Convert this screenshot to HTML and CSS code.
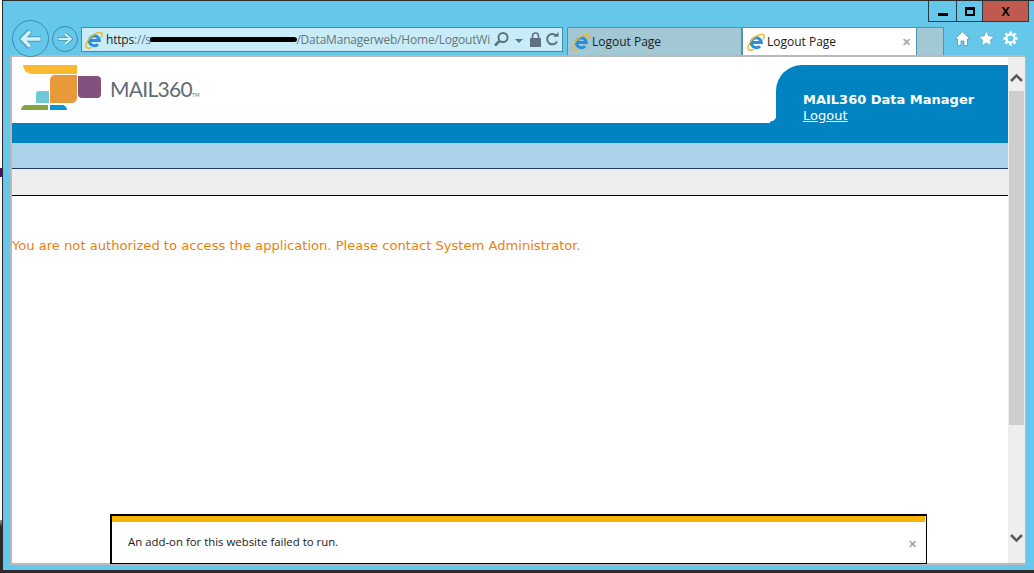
FILE: index.html
```html
<!DOCTYPE html>
<html lang="en">
<head>
    <meta charset="UTF-8">
    <meta name="viewport" content="width=device-width, initial-scale=1.0">
    <title>Logout Page</title>
    <link rel="stylesheet" href="styles.css">
</head>
<body>

    <svg class="defs" width="0" height="0">
        <symbol id="ie" viewBox="0 0 18 18">
            <path d="M4.800 9.500H14.300A5 5 0 1 0 13 13.200" fill="none" stroke="#2b8fd6" stroke-width="3"/>
            <path d="M1.300 16.300C-.5 13 5 4.500 12 2c3-1.100 5.300-.8 5.300 1.300 0 1-.6 2.200-1.500 3.400" fill="none" stroke="#f0b62a" stroke-width="1.400"/>
            <path d="M1.300 16.300c1 1.200 3.200 1.200 5.400 .1" fill="none" stroke="#f0b62a" stroke-width="1.400"/>
        </symbol>
    </svg>

    <div class="window">

        <div class="title-row">
            <div class="controls">
                <div class="ctl ctl-min"><span class="min-glyph"></span></div>
                <div class="ctl ctl-max"><span class="max-glyph"></span></div>
                <div class="ctl ctl-close">X</div>
            </div>
        </div>

        <div class="toolbar">
            <div class="nav-back">
                <svg width="24" height="20" viewBox="0 0 24 20">
                    <path d="M11 2L3 10l8 8M3.500 10H22" fill="none" stroke="#3f9dbd" stroke-width="5.400"/>
                    <path d="M11 2.500L3.500 10l7.500 7.500M4 10H21.500" fill="none" stroke="#d6f0fa" stroke-width="3.400"/>
                </svg>
            </div>
            <div class="nav-forward">
                <svg width="16" height="14" viewBox="0 0 16 14">
                    <path d="M8 1.500L14 7l-6 5.500M14 7H1" fill="none" stroke="#3f9dbd" stroke-width="3.600"/>
                    <path d="M8 1.800L13.800 7 8 12.200M13.500 7H1.500" fill="none" stroke="#d6f0fa" stroke-width="2"/>
                </svg>
            </div>
            <div class="address">
                <svg class="tab-ie" width="18" height="18"><use href="#ie"/></svg>
                <span class="url"><b>https</b>://s<span class="scribble"></span>/DataManagerweb/Home/LogoutWi</span>
                <svg class="addr-icon" width="17" height="17" viewBox="0 0 17 17"><circle cx="10" cy="6.500" r="4.500" fill="none" stroke="#5d7480" stroke-width="2"/><path d="M6.500 10L2 14.500" stroke="#5d7480" stroke-width="2.600"/></svg>
                <span class="caret"></span>
                <svg class="addr-icon" width="13" height="15" viewBox="0 0 13 15"><rect x="1" y="6" width="11" height="9" fill="#5d7480"/><path d="M3.500 6V4a3 3 0 0 1 6 0v2" fill="none" stroke="#5d7480" stroke-width="1.600"/></svg>
                <svg class="addr-icon" width="14" height="15" viewBox="0 0 14 15"><path d="M11.500 4A5.200 5.200 0 1 0 12 9.500" fill="none" stroke="#5d7480" stroke-width="2"/><path d="M8.500 4.800h5V0z" fill="#5d7480"/></svg>
            </div>
            <div class="tab">
                <svg class="tab-ie" width="18" height="18"><use href="#ie"/></svg>
                <span>Logout Page</span>
            </div>
            <div class="tab tab-active">
                <svg class="tab-ie" width="18" height="18"><use href="#ie"/></svg>
                <span>Logout Page</span>
                <span class="tab-close">&#10005;</span>
            </div>
            <div class="tab-new"></div>
            <div class="tools">
                <svg width="17" height="17" viewBox="0 0 17 17"><path d="M8.500 1.500L1 9h2.500v6.500h3.500v-4.500h3v4.500h3.500V9H16z" fill="#fff" stroke="#3f8ea9" stroke-width=".7"/></svg>
                <svg width="17" height="17" viewBox="0 0 17 17"><path d="M8.500 1l2.300 5 5.400.6-4 3.700 1.100 5.400-4.800-2.700-4.800 2.700 1.100-5.400-4-3.700 5.400-.6z" fill="#fff" stroke="#3f8ea9" stroke-width=".5"/></svg>
                <svg width="17" height="17" viewBox="0 0 17 17"><path d="M8.500 1.500v2.500M8.500 13v2.500M1.500 8.500h2.500M13 8.500h2.500M3.500 3.500l1.800 1.800M11.700 11.700l1.800 1.800M13.500 3.500l-1.800 1.800M5.300 11.700l-1.800 1.800" stroke="#fff" stroke-width="2.600"/><circle cx="8.500" cy="8.500" r="4" fill="#65c8ea" stroke="#fff" stroke-width="2.200"/></svg>
            </div>
        </div>

        <div class="frame">
            <div class="page">
                <div class="header">
                    <div class="logo">
                        <div class="logo-mark">
                            <span class="mark mark-yellow"></span>
                            <span class="mark mark-orange"></span>
                            <span class="mark mark-purple"></span>
                            <span class="mark mark-teal"></span>
                            <span class="mark mark-green"></span>
                            <span class="mark mark-blue"></span>
                        </div>
                        <div class="logo-text">MAIL360<small>TM</small></div>
                    </div>
                    <div class="user-panel">
                        <div class="app-name">MAIL360 Data Manager</div>
                        <a class="logout" href="#">Logout</a>
                    </div>
                </div>
                <div class="band-blue"></div>
                <div class="band-light"></div>
                <div class="band-grey"></div>
                <p class="message">You are not authorized to access the application. Please contact System Administrator.</p>
            </div>
            <div class="scrollbar">
                <svg width="15" height="10" viewBox="0 0 15 10"><path d="M2 8l5.500-5.500L13 8" fill="none" stroke="#5a5a5a" stroke-width="2.600"/></svg>
                <div class="thumb"></div>
                <svg width="15" height="10" viewBox="0 0 15 10"><path d="M2 2l5.500 5.500L13 2" fill="none" stroke="#5a5a5a" stroke-width="2.600"/></svg>
            </div>
            <div class="notify">
                <div class="notify-bar"></div>
                <div class="notify-body">
                    <span>An add-on for this website failed to run.</span>
                    <span class="notify-close">&#10005;</span>
                </div>
            </div>
        </div>

    </div>

</body>
</html>
```

FILE: styles.css
```css
* { box-sizing: border-box; }

html, body {
    margin: 0;
    height: 573px;
    overflow: hidden;
}

body {
    background: linear-gradient(#fff 168px, #4b0f6b 168px, #4b0f6b 177px, #fff 177px, #fff 520px, #999 520px, #2b2b2b 527px);
    padding: 1px 0 3px 2px;
    font-family: "Open Sans", sans-serif;
}

.defs { position: absolute; }

.window {
    height: 569px;
    background-color: #65c8ea;
    border-left: 1px solid #2b2b2b;
    box-shadow: 0 -1px 0 #2b2b2b;
    display: flex;
    flex-direction: column;
}

/* title row */
.title-row {
    height: 20px;
    display: flex;
    justify-content: flex-end;
    padding-right: 5px;
}
.controls {
    display: flex;
    height: 21px;
    border: 1px solid #2b3a40;
    border-top: none;
    position: relative;
    z-index: 1;
}
.ctl {
    display: flex;
    align-items: center;
    justify-content: center;
    border-right: 1px solid #2b3a40;
    padding-top: 1px;
}
.ctl-min { width: 28px; align-items: flex-end; padding-bottom: 5px; }
.ctl-max { width: 26px; }
.ctl-close {
    width: 45px;
    border-right: none;
    background-color: #c05a50;
    font: bold 13px "Liberation Sans", sans-serif;
    color: #000;
}
.min-glyph { width: 10px; height: 3px; background-color: #000; }
.max-glyph { width: 10px; height: 9px; border: 2px solid #000; border-top-width: 3px; }

/* toolbar */
.toolbar {
    height: 34px;
    padding: 6px 0 0 9px;
    display: flex;
    align-items: flex-start;
}
.nav-back {
    width: 37px;
    height: 37px;
    margin-top: -7px;
    border: 1px solid #3a8ba8;
    border-radius: 50%;
    display: flex;
    align-items: center;
    justify-content: center;
    position: relative;
    z-index: 1;
}
.nav-forward {
    width: 26px;
    height: 26px;
    margin: -1px 0 0 3px;
    border: 1px solid #3a8ba8;
    border-radius: 50%;
    display: flex;
    align-items: center;
    justify-content: center;
}
.address {
    width: 482px;
    height: 25px;
    margin-left: 3px;
    padding: 0 3px 0 3px;
    background-color: #c8edf8;
    border: 1px solid #3f8ea9;
    display: flex;
    align-items: center;
    gap: 3px;
}
.url {
    flex: 1;
    margin-left: 0;
    font-size: 12px;
    letter-spacing: -.2px;
    color: #6b7478;
    white-space: nowrap;
    overflow: hidden;
    display: flex;
    align-items: center;
}
.url b { font-weight: 400; color: #1c1c1c; }
.scribble {
    width: 150px;
    height: 5px;
    margin: 0 -1px;
    background-color: #000;
    border-radius: 3px 4px 3px 2px;
}
.addr-icon { flex: none; }
.caret {
    margin: 2px 3px 0 2px;
    border: 4px solid transparent;
    border-top: 4px solid #5d7480;
    border-bottom: none;
}
.tab {
    width: 175px;
    height: 28px;
    margin-left: 4px;
    padding: 0 4px;
    background-color: #a2c8d6;
    border: 1px solid #5296ae;
    border-bottom: none;
    display: flex;
    align-items: center;
    gap: 2px;
    font-size: 12px;
    color: #1c1c1c;
}
.tab-active {
    margin-left: 0;
    background-color: #fff;
    position: relative;
}
.tab-ie { flex: none; }
.tab-close {
    margin-left: auto;
    font-size: 11px;
    font-weight: 700;
    color: #a8a8a8;
    padding-right: 1px;
}
.tab-new {
    width: 27px;
    height: 28px;
    background-color: #a2c8d6;
    border: 1px solid #5296ae;
    border-left: none;
    border-bottom: none;
}
.tools {
    margin-left: 10px;
    margin-top: 3px;
    display: flex;
    gap: 7px;
}

/* page frame */
.frame {
    flex: 1;
    margin: 0 8px 5px 7px;
    border: 2px solid #b9b9b9;
    border-right-width: 1px;
    background-color: #fff;
    display: flex;
    position: relative;
}
.page {
    flex: 1;
    min-width: 0;
    display: flex;
    flex-direction: column;
}
.header {
    height: 66px;
    padding-top: 8px;
    display: flex;
    justify-content: space-between;
}
.logo {
    display: flex;
    align-items: flex-start;
}
.logo-mark {
    width: 98px;
    height: 45px;
    position: relative;
}
.mark { position: absolute; }
.mark-yellow { left: 11px; top: 0; width: 54px; height: 9px; background-color: #fbb92e; border-radius: 0 0 0 9px; }
.mark-orange { left: 38px; top: 10px; width: 27px; height: 28px; background-color: #e79a37; border-radius: 5px 0 5px 0; }
.mark-purple { left: 66px; top: 11px; width: 23px; height: 22px; background-color: #84507f; border-radius: 0 4px 4px 4px; }
.mark-teal { left: 24px; top: 26px; width: 13px; height: 12px; background-color: #72c8d6; border-radius: 3px 0 0 0; }
.mark-green { left: 9px; top: 40px; width: 27px; height: 5px; background-color: #85a63f; border-radius: 6px 0 0 0; }
.mark-blue { left: 38px; top: 40px; width: 17px; height: 5px; background-color: #0a94d2; border-radius: 0 6px 0 0; }
.logo-text {
    margin-top: 11px;
    font-family: "Lato", sans-serif;
    font-size: 21px;
    letter-spacing: -.7px;
    line-height: 26px;
    color: #5f6b74;
}
.logo-text small {
    font-size: 5px;
    letter-spacing: 0;
}
.user-panel {
    width: 232px;
    background-color: #0083c0;
    border-top-left-radius: 26px;
    padding: 26px 0 0 27px;
    font-family: "DejaVu Sans", sans-serif;
    font-size: 13px;
    line-height: 17px;
    color: #fff;
    position: relative;
}
.user-panel::before {
    content: "";
    position: absolute;
    left: -6px;
    bottom: 0;
    width: 6px;
    height: 8px;
    background: radial-gradient(circle at 0 0, transparent 6px, #0083c0 7px);
}
.app-name { font-weight: 700; }
.logout { display: block; margin-top: -1px; color: #fff; }
.band-blue { height: 20px; background-color: #0083c0; }
.band-light {
    height: 26px;
    background-color: #abd2ea;
    border-bottom: 1px solid #1f3a5f;
}
.band-grey {
    height: 27px;
    background-color: #eeeeee;
    border-bottom: 1px solid #000;
}
.message {
    margin: 42px 0 0;
    font-family: "DejaVu Sans", sans-serif;
    font-size: 13.100px;
    color: #e8820c;
}

/* scrollbar */
.scrollbar {
    width: 17px;
    background-color: #eeeeee;
    display: flex;
    flex-direction: column;
    align-items: center;
    padding: 16px 0 20px;
}
.thumb {
    width: 15px;
    height: 334px;
    margin: 8px 0 auto;
    background-color: #cdcdcd;
}

/* notification */
.notify {
    position: absolute;
    left: 98px;
    bottom: -1px;
    width: 817px;
    height: 50px;
    background-color: #fff;
    border: 2px solid #000;
    border-width: 2px 1px 1px 2px;
    padding-right: 1px;
    display: flex;
    flex-direction: column;
}
.notify-bar {
    height: 6px;
    background-color: #f6b300;
}
.notify-body {
    flex: 1;
    display: flex;
    align-items: center;
    justify-content: space-between;
    padding: 0 8px 2px 16px;
    font-size: 11.400px;
    color: #1a1a1a;
}
.notify-close {
    font-size: 11px;
    font-weight: 700;
    color: #a8a8a8;
    padding-top: 4px;
}
```
